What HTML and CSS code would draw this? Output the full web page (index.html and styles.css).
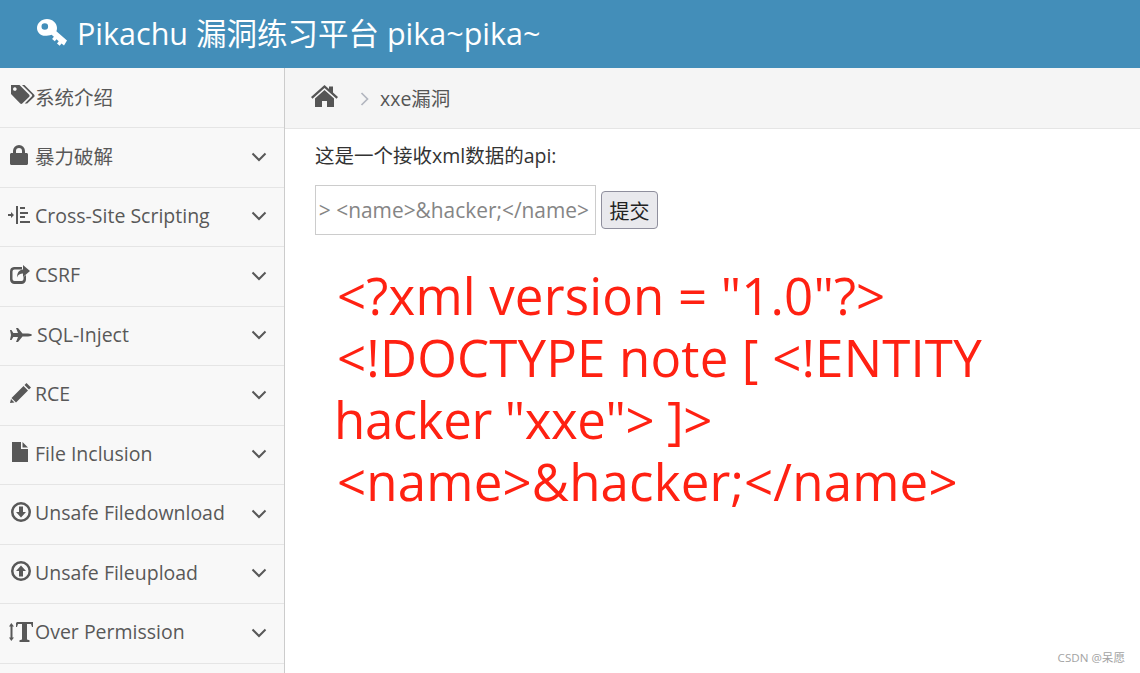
FILE: index.html
```html
<!DOCTYPE html>
<html lang="zh">
<head>
<meta charset="utf-8">
<title>Pikachu</title>
<link rel="stylesheet" href="styles.css">
</head>
<body>
<svg class="defs" width="0" height="0"><symbol id="chev" viewBox="0 0 16 10"><path d="M1.500 1.500 8 8l6.500-6.500" fill="none" stroke="currentColor" stroke-width="2"/></symbol></svg>
<header class="topbar">
  <svg class="brand-icon" viewBox="0 0 30 28"><path fill="#fff" fill-rule="evenodd" d="M10 0c5.500 0 10 4 10 9 0 1.200-.2 2.200-.6 3.200L30 21.500l-3 5-2.500-2-1.800 2.200-2.700-2.300 1.700-2.200-2.200-2-1.700 2-2.700-2.300 1.800-2.100-2.300-2c-1 .4-2.200.7-3.500.7C4.500 18 0 14 0 9s4.500-9 10-9ZM7.800 4.200A3.300 3.300 0 0 0 4.500 7.500a3.300 3.300 0 0 0 3.300 3.300 3.300 3.300 0 0 0 3.300-3.300 3.300 3.300 0 0 0-3.300-3.300Z"/></svg>
  <span class="brand-text">Pikachu 漏洞练习平台 pika~pika~</span>
</header>
<div class="layout">
  <aside class="sidebar">
    <div class="nav-item"><svg class="nav-icon tag" viewBox="0 0 25 20"><path d="M1 1h8.500L19 10.500a1.800 1.800 0 0 1 0 2.500l-6.500 6.300a1.800 1.800 0 0 1-2.500 0L1 10ZM4.800 3.200a1.800 1.800 0 1 0 .1 0Z" fill-rule="evenodd"/><path d="M12 1h2.500L24 10.500a1.800 1.800 0 0 1 0 2.500l-6.800 6.600h-2.500l7-7a1.500 1.500 0 0 0 0-2Z"/></svg><span>系统介绍</span></div>
    <div class="nav-item"><svg class="nav-icon lock" viewBox="0 0 18 20"><path fill-rule="evenodd" d="M3 8V6a6 6 0 0 1 12 0v2h1.500c.8 0 1.500.7 1.500 1.500v9c0 .8-.7 1.500-1.500 1.500h-15C.7 20 0 19.300 0 18.500v-9C0 8.700.7 8 1.500 8Zm3 0h6V6a3 3 0 0 0-6 0Z"/></svg><span>暴力破解</span><svg class="chev"><use href="#chev"/></svg></div>
    <div class="nav-item"><svg class="nav-icon indent" viewBox="0 0 22 18"><path d="M8 0h2v18H8zM12 1h5v2h-5zM12 6h8v2h-8zM12 10h5v2h-5zM12 15h10v2H12zM0 8h3V6l3 3-3 3v-2H0z"/></svg><span>Cross-Site Scripting</span><svg class="chev"><use href="#chev"/></svg></div>
    <div class="nav-item"><svg class="nav-icon share" viewBox="0 0 20 19"><path d="M4 2h8v2.500H4.500A2 2 0 0 0 2.500 6.500v7.500a2 2 0 0 0 2 2h7a2 2 0 0 0 2-2v-2l2.500-2V14.500A4.500 4.500 0 0 1 11.500 19h-7A4.500 4.500 0 0 1 0 14.500v-8A4.500 4.500 0 0 1 4 2Z"/><path d="M13 0l7 6-7 6V8.500c-3 0-5 1-6 4 0-5 2-7.500 6-8Z"/></svg><span>CSRF</span><svg class="chev"><use href="#chev"/></svg></div>
    <div class="nav-item"><svg class="nav-icon plane" viewBox="0 0 22 14"><path d="M0 2h1.500l1.800 3H8L6 0h2l4.500 5.500H18c2 0 4 .8 4 1.500s-2 1.500-4 1.500h-5.500L8 14H6l2-5H3.300L1.500 12H0l1-5Z"/></svg><span class="shift">SQL-Inject</span><svg class="chev"><use href="#chev"/></svg></div>
    <div class="nav-item"><svg class="nav-icon pencil" viewBox="0 0 21 20"><path d="M16.500 0 21 4.500l-2 2L14.500 2ZM13.500 3 18 7.500 6 19.500 1.500 15ZM1 16l3.500 3.500L0 20Z"/></svg><span>RCE</span><svg class="chev"><use href="#chev"/></svg></div>
    <div class="nav-item"><svg class="nav-icon file" viewBox="0 0 16 20"><path d="M0 0h9v7h7v13H0ZM10.500 0 16 5.500h-5.500Z"/></svg><span>File Inclusion</span><svg class="chev"><use href="#chev"/></svg></div>
    <div class="nav-item"><svg class="nav-icon circ" viewBox="0 0 20 20"><path fill-rule="evenodd" d="M10 0a10 10 0 1 1 0 20 10 10 0 0 1 0-20Zm0 2.500a7.500 7.500 0 1 0 0 15 7.500 7.500 0 0 0 0-15Z"/><path d="M8 4.500h4V10h3l-5 5.500L5 10h3Z"/></svg><span>Unsafe Filedownload</span><svg class="chev"><use href="#chev"/></svg></div>
    <div class="nav-item"><svg class="nav-icon circ" viewBox="0 0 20 20"><path fill-rule="evenodd" d="M10 0a10 10 0 1 1 0 20 10 10 0 0 1 0-20Zm0 2.500a7.500 7.500 0 1 0 0 15 7.500 7.500 0 0 0 0-15Z"/><path d="M8 15.500h4V10h3L10 4.500 5 10h3Z"/></svg><span>Unsafe Fileupload</span><svg class="chev"><use href="#chev"/></svg></div>
    <div class="nav-item"><svg class="nav-icon theight" viewBox="0 0 24 20"><path d="M8 0h16v5h-1l-1-3h-4v15.500l2.500.8V20H10.500v-1.700l2.500-.8V2H9L8 5H7V1ZM2.300 1 5 4.500H3.500v11H5L2.300 19 0 15.500h1.500v-11H0Z"/></svg><span>Over Permission</span><svg class="chev"><use href="#chev"/></svg></div>
  </aside>
  <main class="content">
    <nav class="crumbs">
      <svg class="home" viewBox="0 0 27 22"><path d="M13.500 0 18 4V1.500h4v6l5 4.500-1.500 1.700L13.500 3 1.500 13.700 0 12Z"/><path d="M13.500 5 23 13.500V22h-7v-6h-5v6H4v-8.500Z"/></svg>
      <svg class="crumb-sep" viewBox="0 0 9 14"><path d="M1.500 1 7.500 7l-6 6" fill="none" stroke="currentColor" stroke-width="1.700"/></svg>
      <span>xxe漏洞</span>
    </nav>
    <section class="panel">
      <p class="intro">这是一个接收xml数据的api:</p>
      <form class="api-form">
        <div class="fake-input"><span>&gt; &lt;name&gt;&amp;hacker;&lt;/name&gt;</span></div>
        <button class="submit" type="button">提交</button>
      </form>
      <div class="payload">
        <div class="payload-line">&lt;?xml version = "1.0"?&gt;</div>
        <div class="payload-line">&lt;!DOCTYPE note [ &lt;!ENTITY</div>
        <div class="payload-line pull">hacker "xxe"&gt; ]&gt;</div>
        <div class="payload-line">&lt;name&gt;&amp;hacker;&lt;/name&gt;</div>
      </div>
    </section>
  </main>
</div>
<div class="watermark">CSDN @呆愿</div>
</body>
</html>
```
FILE: styles.css
```css
* { box-sizing: border-box; }
html, body { margin: 0; height: 100%; overflow: hidden; }
body {
  font-family: "Open Sans", "Noto Sans CJK SC", sans-serif;
  background: #fff;
  color: #393939;
  position: relative;
}
.defs { position: absolute; }
.topbar {
  height: 68px;
  background: #438eb9;
  color: #fff;
  display: flex;
  align-items: center;
  padding-left: 37px;
}
.brand-icon { width: 30px; height: 28px; margin-right: 10px; margin-top: -2px; }
.brand-text { font-size: 30.500px; margin-top: -5px; }
.layout { display: flex; height: 605px; }
.sidebar {
  width: 285px;
  flex: none;
  background: #f8f8f8;
  border-right: 1px solid #ccc;
  padding-top: 0.5px;
}
.nav-item {
  height: 59.5px;
  padding-bottom: 3px;
  border-bottom: 1px solid #e5e5e5;
  display: flex;
  align-items: center;
  padding-left: 10px;
  font-size: 19.500px;
  color: #585858;
  position: relative;
}
.nav-icon { flex: none; fill: #585858; margin-right: 1px; }
.tag { width: 25px; height: 20px; margin-right: 0; margin-top: -4px; }
.lock { width: 18px; height: 20px; margin-right: 7px; margin-top: -1px; }
.indent { width: 22px; height: 18px; margin-left: -2px; margin-right: 5px; margin-top: -1px; }
.share { width: 20px; height: 19px; margin-right: 5px; margin-top: -1px; }
.plane { width: 22px; height: 14px; margin-right: 5px; margin-top: 1px; }
.pencil { width: 21px; height: 20px; margin-right: 4px; margin-top: -1px; }
.file { width: 16px; height: 20px; margin-left: 2px; margin-right: 7px; margin-top: -3px; }
.circ { width: 20px; height: 20px; margin-left: 1px; margin-right: 4px; margin-top: -2px; }
.theight { width: 24px; height: 20px; margin-left: -1px; margin-right: 2px; }
.chev {
  width: 16px;
  height: 10px;
  position: absolute;
  left: 251px;
  top: 23.500px;
  color: #585858;
}
.content { flex: 1; min-width: 0; }
.crumbs {
  height: 61px;
  background: #f5f5f5;
  border-bottom: 1px solid #e5e5e5;
  display: flex;
  align-items: center;
  padding-left: 26px;
  padding-bottom: 1px;
  font-size: 19.500px;
  color: #555;
}
.home { width: 27px; height: 22px; fill: #555; margin-top: -3px; margin-right: 22px; }
.crumb-sep { width: 9px; height: 14px; color: #b2b6bf; margin-right: 11px; margin-top: 3px; }
.panel { padding: 0 30px; }
.intro { margin: 13px 0 0; font-size: 19.500px; line-height: 28px; color: #333; }
.api-form { display: flex; align-items: center; gap: 5px; margin-top: 15px; }
.fake-input {
  width: 281px;
  height: 50px;
  border: 1px solid #ccc;
  background: #fff;
  color: #858585;
  font-size: 20.900px;
  padding: 0 6px;
  display: flex;
  align-items: center;
  justify-content: flex-end;
  overflow: hidden;
  white-space: nowrap;
}
.submit {
  width: 57px;
  height: 38px;
  padding: 0;
  background: #e9e9ed;
  border: 1px solid #8f8f9d;
  border-radius: 4px;
  font: 20px "Open Sans", "Noto Sans CJK SC", sans-serif;
  color: #222;
}
.payload {
  margin: 29px 0 0 22px;
  font-size: 51px;
  letter-spacing: 0.17px;
  color: #ff2112;
  white-space: nowrap;
}
.payload-line { height: 62px; line-height: 62px; }
.pull { margin-left: -3px; letter-spacing: -0.4px; }
.watermark {
  position: absolute;
  right: 15px;
  bottom: 8px;
  font-size: 11.600px;
  color: #a3a3a3;
}
```
